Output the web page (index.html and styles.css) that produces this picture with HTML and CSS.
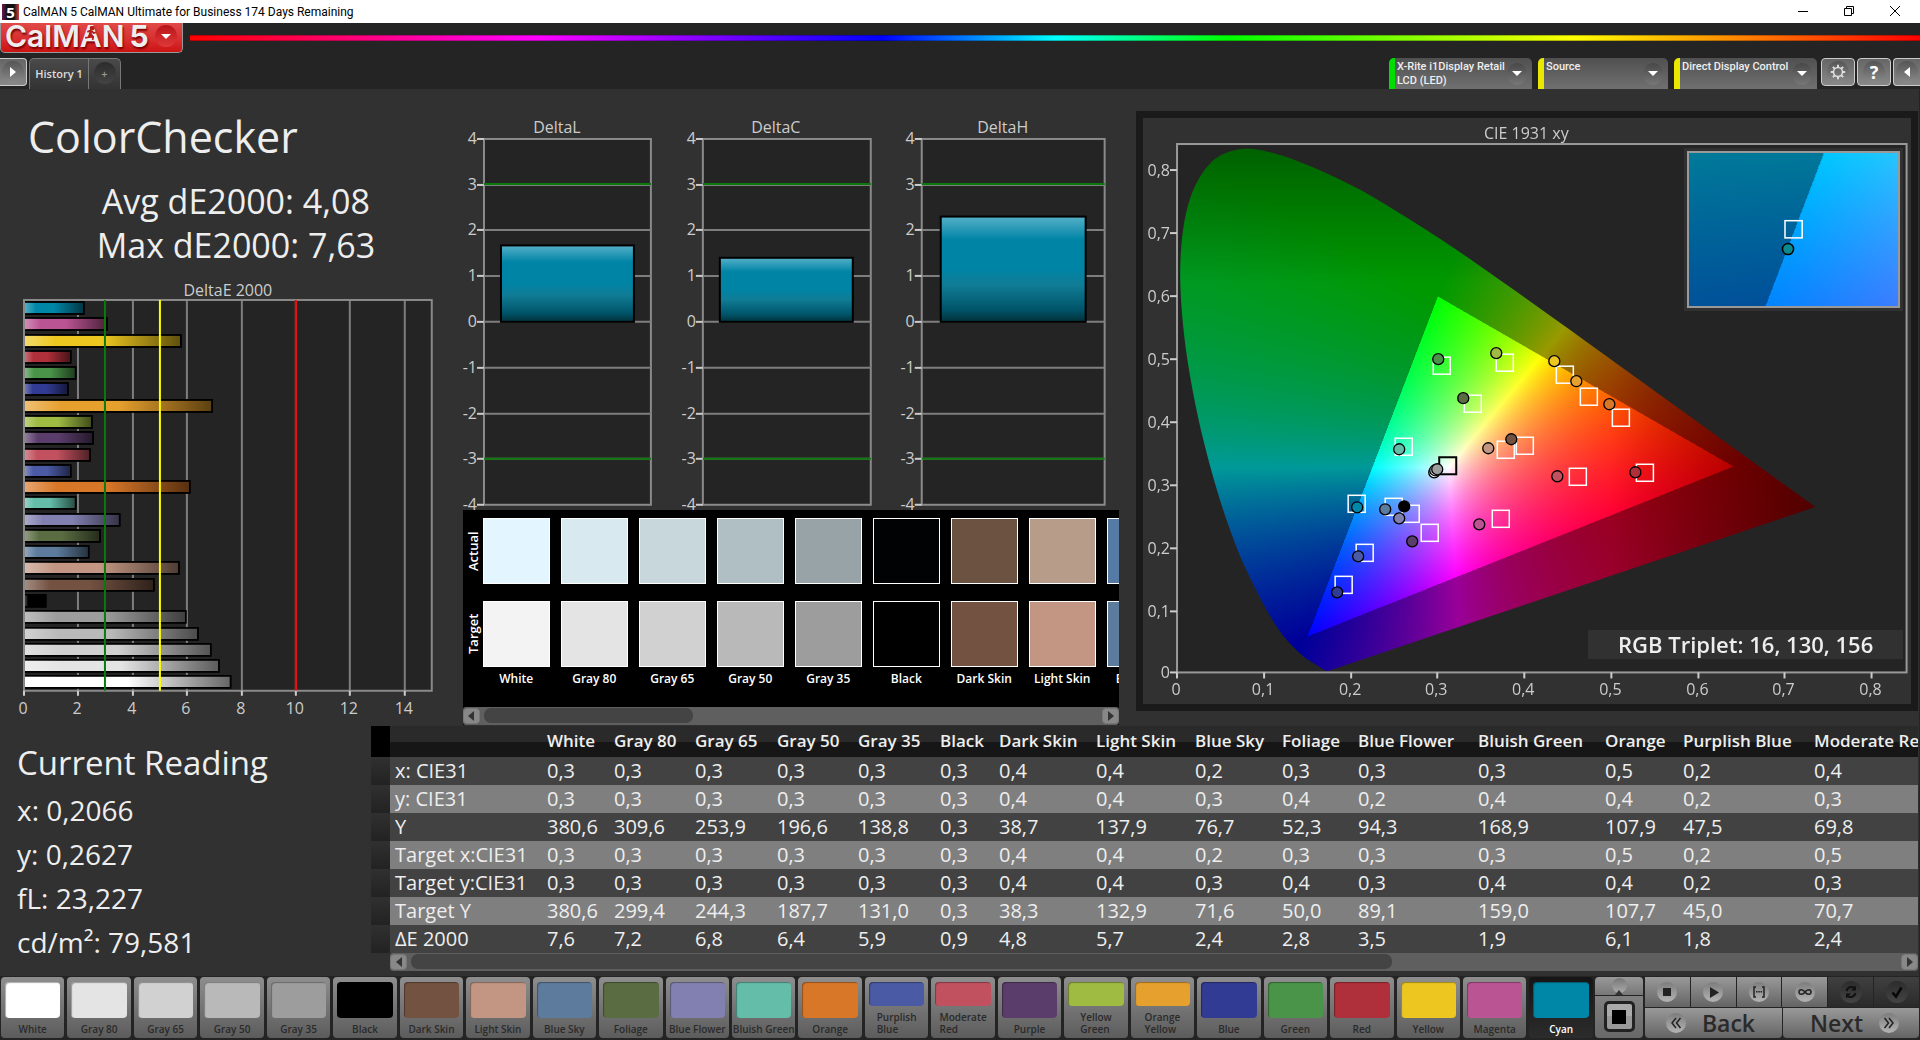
FILE: index.html
```
<!DOCTYPE html>
<html lang="en">
<head>
<meta charset="utf-8">
<title>CalMAN 5 CalMAN Ultimate for Business</title>
<link rel="stylesheet" href="styles.css">
</head>
<body>
<div class="titlebar">
  <span class="app-icon">5</span>
  <span class="app-title">CalMAN 5 CalMAN Ultimate for Business 174 Days Remaining</span>
  <div class="win-controls">
    <button aria-label="Minimize"><svg width="12" height="12" viewBox="0 0 12 12"><path d="M1 6.5h10" stroke="#000" fill="none"/></svg></button>
    <button aria-label="Restore"><svg width="12" height="12" viewBox="0 0 12 12"><path d="M1.500 3.500h7v7h-7zM3.500 3.500v-2h7v7h-2" stroke="#000" fill="none"/></svg></button>
    <button aria-label="Close"><svg width="12" height="12" viewBox="0 0 12 12"><path d="M1 1l10 10M11 1L1 11" stroke="#000" fill="none"/></svg></button>
  </div>
</div>

<header class="brandbar">
  <button class="brand"><span class="brand-name">CalM<span class="brand-a">A<svg class="runner" viewBox="0 0 12 14"><circle cx="7.500" cy="2" r="1.700"/><path d="M6.500 4L3 5.500M6.500 4l-1 4 3 2-.5 3M5.500 8L4 10.500 1 11M6.800 4.500L9 6.500l2-.5" fill="none" stroke-width="1.600"/></svg></span>N<span class="brand-num">5</span></span><span class="knob red"><i class="tri down"></i></span></button>
  <div class="rainbow"></div>
</header>

<nav class="tabbar">
  <button class="square first" aria-label="Show workflow"><span class="knob"><i class="tri right"></i></span></button>
  <div class="tabs">
    <button class="tab">History 1</button>
    <button class="tab add" aria-label="Add history"><span class="knob dark">+</span></button>
  </div>
  <div class="devices">
    <button class="device green"><span>X-Rite i1Display Retail<br>LCD (LED)</span><span class="knob mid"><i class="tri down"></i></span></button>
    <button class="device source"><span>Source</span><span class="knob mid"><i class="tri down"></i></span></button>
    <button class="device"><span>Direct Display Control</span><span class="knob mid"><i class="tri down"></i></span></button>
  </div>
  <div class="tools">
    <button class="square" aria-label="Settings"><span class="knob"><svg width="16" height="16" viewBox="0 0 16 16"><circle cx="8" cy="8" r="4.500" fill="none" stroke="#ddd" stroke-width="1.600"/><path d="M8 .8v2.400M8 12.800v2.400M.8 8h2.400M12.800 8h2.400M2.900 2.900l1.700 1.700M11.400 11.400l1.700 1.700M13.100 2.900l-1.700 1.700M4.600 11.400l-1.700 1.700" stroke="#ddd" stroke-width="2"/></svg></span></button>
    <button class="square" aria-label="Help"><span class="knob help">?</span></button>
    <button class="square last" aria-label="Show panel"><span class="knob"><i class="tri left"></i></span></button>
  </div>
</nav>

<main>
  <div class="upper">
    <section class="summary">
      <h1>ColorChecker</h1>
      <p class="stat">Avg dE2000: 4,08</p>
      <p class="stat">Max dE2000: 7,63</p>
      <svg id="deltae" class="chart" viewBox="0 1 440 449" role="img" aria-label="DeltaE 2000"></svg>
    </section>

    <section class="middle">
      <svg id="deltas" class="chart" viewBox="0 0 690 421" role="img" aria-label="DeltaL, DeltaC and DeltaH"></svg>
      <div class="strip">
        <div class="strip-body">
          <div class="side"><span>Actual</span><span>Target</span></div>
          <div class="pairs" id="pairs"></div>
        </div>
        <div class="scroll"><button aria-label="Scroll left"><i class="tri left"></i></button><div class="track"><div class="thumb short"></div></div><button aria-label="Scroll right"><i class="tri right"></i></button></div>
      </div>
    </section>

    <section class="cie">
      <div class="cie-stage">
        <canvas id="gamut" class="gamut" width="1458" height="1056"></canvas>
        <svg id="ciechart" class="cie-axes" viewBox="0 0 767 586" role="img" aria-label="CIE 1931 xy"></svg>
        <div class="inset"><canvas id="detail" width="207" height="151"></canvas>
          <svg viewBox="0 0 207 151"><rect x="95" y="67" width="17" height="17" fill="none" stroke="#fff" stroke-width="1.500"/><ellipse cx="98" cy="95" rx="5.500" ry="5.500" fill="#0a8a8c" stroke="#000" stroke-width="1.500"/></svg></div>
        <div class="triplet">RGB Triplet: 16, 130, 156</div>
      </div>
    </section>
  </div>

  <div class="lower">
    <section class="reading">
      <h2>Current Reading</h2>
      <p>x: 0,2066</p>
      <p>y: 0,2627</p>
      <p>fL: 23,227</p>
      <p>cd/m²: 79,581</p>
    </section>
    <section class="data">
      <div class="data-clip">
        <table>
          <colgroup><col style="width:19px"><col style="width:152px"><col style="width:67px"><col style="width:81px"><col style="width:82px"><col style="width:81px"><col style="width:82px"><col style="width:59px"><col style="width:97px"><col style="width:99px"><col style="width:87px"><col style="width:76px"><col style="width:120px"><col style="width:127px"><col style="width:78px"><col style="width:131px"><col style="width:140px"></colgroup>
          <thead><tr><td></td><td></td><th>White</th><th>Gray 80</th><th>Gray 65</th><th>Gray 50</th><th>Gray 35</th><th>Black</th><th>Dark Skin</th><th>Light Skin</th><th>Blue Sky</th><th>Foliage</th><th>Blue Flower</th><th>Bluish Green</th><th>Orange</th><th>Purplish Blue</th><th>Moderate Red</th></tr></thead>
          <tbody>
          <tr><td></td><th>x: CIE31</th><td>0,3</td><td>0,3</td><td>0,3</td><td>0,3</td><td>0,3</td><td>0,3</td><td>0,4</td><td>0,4</td><td>0,2</td><td>0,3</td><td>0,3</td><td>0,3</td><td>0,5</td><td>0,2</td><td>0,4</td></tr>
          <tr><td></td><th>y: CIE31</th><td>0,3</td><td>0,3</td><td>0,3</td><td>0,3</td><td>0,3</td><td>0,3</td><td>0,4</td><td>0,4</td><td>0,3</td><td>0,4</td><td>0,2</td><td>0,4</td><td>0,4</td><td>0,2</td><td>0,3</td></tr>
          <tr><td></td><th>Y</th><td>380,6</td><td>309,6</td><td>253,9</td><td>196,6</td><td>138,8</td><td>0,3</td><td>38,7</td><td>137,9</td><td>76,7</td><td>52,3</td><td>94,3</td><td>168,9</td><td>107,9</td><td>47,5</td><td>69,8</td></tr>
          <tr><td></td><th>Target x:CIE31</th><td>0,3</td><td>0,3</td><td>0,3</td><td>0,3</td><td>0,3</td><td>0,3</td><td>0,4</td><td>0,4</td><td>0,2</td><td>0,3</td><td>0,3</td><td>0,3</td><td>0,5</td><td>0,2</td><td>0,5</td></tr>
          <tr><td></td><th>Target y:CIE31</th><td>0,3</td><td>0,3</td><td>0,3</td><td>0,3</td><td>0,3</td><td>0,3</td><td>0,4</td><td>0,4</td><td>0,3</td><td>0,4</td><td>0,3</td><td>0,4</td><td>0,4</td><td>0,2</td><td>0,3</td></tr>
          <tr><td></td><th>Target Y</th><td>380,6</td><td>299,4</td><td>244,3</td><td>187,7</td><td>131,0</td><td>0,3</td><td>38,3</td><td>132,9</td><td>71,6</td><td>50,0</td><td>89,1</td><td>159,0</td><td>107,7</td><td>45,0</td><td>70,7</td></tr>
          <tr><td></td><th>ΔE 2000</th><td>7,6</td><td>7,2</td><td>6,8</td><td>6,4</td><td>5,9</td><td>0,9</td><td>4,8</td><td>5,7</td><td>2,4</td><td>2,8</td><td>3,5</td><td>1,9</td><td>6,1</td><td>1,8</td><td>2,4</td></tr>
          </tbody>
        </table>
      </div>
      <div class="scroll"><button aria-label="Scroll left"><i class="tri left"></i></button><div class="track"><div class="thumb long"></div></div><button aria-label="Scroll right"><i class="tri right"></i></button></div>
    </section>
  </div>
</main>

<footer>
  <div class="patches" id="patches"></div>
  <div class="pattern">
    <button class="up" aria-label="More"><span class="knob tiny"><i class="tri up"></i></span></button>
    <button class="window" aria-label="Pattern window"><span></span></button>
  </div>
  <div class="controls">
    <div class="row">
      <button aria-label="Stop"><span class="knob lite"><svg width="20" height="20" viewBox="0 0 20 20"><path d="M6 6h8v8H6z"/></svg></span></button>
      <button aria-label="Play"><span class="knob lite"><svg width="20" height="20" viewBox="0 0 20 20"><path d="M7 5l9 5.500L7 16z"/></svg></span></button>
      <button aria-label="Read series"><span class="knob lite"><svg width="20" height="20" viewBox="0 0 20 20"><path d="M7 5H5v10h2M13 5h2v10h-2" fill="none" stroke="#222" stroke-width="1.500"/><path d="M7 9h1.500v1.500H7zM9.300 9h1.500v1.500H9.300zM11.600 9h1.500v1.500h-1.500z"/></svg></span></button>
      <button aria-label="Read continuous"><span class="knob lite"><svg width="20" height="20" viewBox="0 0 20 20"><path d="M10 10C8 7 4 7 4 10s4 3 6 0 6-3 6 0-4 3-6 0z" fill="none" stroke="#222" stroke-width="1.500"/></svg></span></button>
      <button class="off" aria-label="Refresh"><span class="knob dark"><svg width="20" height="20" viewBox="0 0 20 20"><path d="M5.500 9a5 5 0 0 1 8-3M14.500 11a5 5 0 0 1-8 3" fill="none" stroke="#111" stroke-width="2"/><path d="M15 3.500v5h-5zM5 16.500v-5h5z" fill="#111"/></svg></span></button>
      <button class="off" aria-label="Accept"><span class="knob dark"><svg width="20" height="20" viewBox="0 0 20 20"><path d="M5.500 10.500l3.500 4 5.500-9" fill="none" stroke="#080808" stroke-width="2.600"/></svg></span></button>
    </div>
    <div class="row big">
      <button><span class="knob lite"><svg width="20" height="20" viewBox="0 0 20 20"><path d="M10 5l-4 5 4 5M14.500 5l-4 5 4 5" fill="none" stroke="#222" stroke-width="1.500"/></svg></span>Back</button>
      <button>Next<span class="knob lite"><svg width="20" height="20" viewBox="0 0 20 20"><path d="M10 5l4 5-4 5M5.500 5l4 5-4 5" fill="none" stroke="#222" stroke-width="1.500"/></svg></span></button>
    </div>
  </div>
</footer>
<script src="charts.js"></script>
</body>
</html>
```

FILE: styles.css
```
* { box-sizing: border-box; }
body { margin: 0; background: #242424; color: #eee; font-family: "Open Sans", "Noto Sans", sans-serif; overflow-x: hidden; }
h1, h2, p { margin: 0; font-weight: 400; }
button { font: inherit; color: inherit; border: 0; padding: 0; margin: 0; background: none; }
svg { display: block; fill: #222; }

/* window title */
.titlebar { display: flex; align-items: center; height: 23px; background: #fff; color: #000; font: 12px Roboto, sans-serif; padding-left: 2px; }
.app-icon { width: 17px; height: 16px; margin-right: 4px; background: linear-gradient(90deg, #6a1a4a, #111 30%, #111 70%, #c44 ); color: #fff; font: bold 15px/16px "Open Sans", sans-serif; text-align: center; }
.win-controls { display: flex; margin-left: auto; margin-right: 2px; }
.win-controls button { width: 46px; height: 22px; display: flex; align-items: center; justify-content: center; padding-bottom: 2px; }

/* brand */
.brandbar { display: flex; align-items: flex-start; gap: 7px; height: 35px; }
.brand { width: 183px; height: 30px; display: flex; align-items: center; justify-content: space-between; padding: 0 5px 3px 4px; color: #eee; background: linear-gradient(#e04a48, #d82c2e 60%, #cc1212); border: 1px solid #999; border-top: 0; border-radius: 0 0 5px 5px; }
.brand-name { font: 600 30px/28px "Inter", sans-serif; text-shadow: 1px 2px 2px #700; white-space: nowrap; }
.brand-a { position: relative; }
.runner { position: absolute; left: 4px; top: 8px; width: 13px; height: 15px; fill: #b41a1a; stroke: #b41a1a; }
.brand-num { margin-left: 5px; font-weight: 700; }
.rainbow { flex: 1; height: 6px; margin-top: 12px; background: linear-gradient(90deg, #f00, #f0f 20%, #00f 40%, #0ff 50%, #0f0 60%, #ff0 80%, #f00); border-top: 1px solid #0004; border-bottom: 1px solid #0004; }

.knob { flex: none; width: 22px; height: 22px; border-radius: 50%; display: flex; align-items: center; justify-content: center; background: linear-gradient(#555, #8a8a8a); }
.knob.red { background: linear-gradient(#b81418, #e0383a); }
.knob.mid { background: linear-gradient(#484848, #777); }
.knob.dark { background: linear-gradient(#2c2c2c, #444); color: #999; }
.knob.lite { width: 20px; height: 20px; background: linear-gradient(#7c7c7c, #b4b4b4); }
.knob.tiny { width: 15px; height: 15px; background: linear-gradient(#777, #aaa); }
.knob.help { font-size: 18px; font-weight: 700; line-height: 22px; color: #fff; }
.tri { display: block; width: 0; height: 0; border: 5px solid transparent; }
.tri.down { border-top-color: #fff; border-bottom: 0; }
.tri.right { border-left: 6px solid #fff; border-right: 0; }
.tri.left { border-right: 6px solid #fff; border-left: 0; }
.tri.up { border-bottom-color: #333; border-top: 0; border-width: 0 4px 5px; }

/* tab bar */
.tabbar { display: flex; align-items: flex-start; height: 31px; font-size: 12px; font-weight: 600; }
.square { width: 34px; height: 28px; display: flex; align-items: center; justify-content: center; background: linear-gradient(#666, #888); border: 1px solid #ccc; border-radius: 4px; }
.square.first { width: 27px; border-left: 0; border-radius: 0 4px 4px 0; }
.square.last { width: 27px; border-right: 0; border-radius: 4px 0 0 4px; }
.tabs { display: flex; margin-left: 2px; border: 1px solid #777; border-bottom: 0; border-radius: 5px 5px 0 0; height: 31px; background: linear-gradient(#4a4a4a, #333); }
.tab { width: 58px; font-size: 11px; color: #ddd; padding-bottom: 2px; }
.tab.add { width: 32px; border-left: 1px solid #777; display: flex; align-items: center; justify-content: center; }
.devices { display: flex; gap: 6px; margin-left: auto; }
.device { width: 143px; height: 31px; display: flex; align-items: flex-start; justify-content: space-between; text-align: left; padding: 0 5px 0 2px; font: 500 11px/14px Roboto, sans-serif; white-space: nowrap; background: linear-gradient(#505050, #707070); border-left: 6px solid #e8e800; border-radius: 5px 5px 0 0; color: #eee; }
.device.source { width: 130px; }
.device.green { border-left-color: #0d0; }
.device span:first-child { padding-top: 2px; }
.device .knob { width: 20px; align-self: center; }
.tools { display: flex; gap: 2px; margin-left: 4px; }

/* workspace */
main { background: #313131; border-left: 1px solid #222; margin-right: 1px; margin-left: -1px; }
.upper { display: grid; grid-template-columns: minmax(0, 440fr) minmax(0, 690fr) minmax(0, 790fr); align-items: start; }
.chart { width: 100%; }
.chart text, .cie-axes text { fill: #ccc; font-size: 16px; }
.summary h1 { font-size: 43px; line-height: 56px; padding: 20px 0 0 28px; }
.stat { font-size: 34px; line-height: 44px; text-align: center; padding-left: 32px; white-space: nowrap; }
.stat:nth-of-type(1) { margin-top: 14px; }
.strip { margin: 0 10px 0 23px; background: #000; }
.strip-body { display: flex; height: 197px; padding-top: 8px; overflow: hidden; }
.side { flex: none; width: 20px; font-size: 13px; font-weight: 600; }
.side span { display: block; height: 66px; writing-mode: vertical-rl; transform: rotate(180deg); text-align: center; line-height: 20px; color: #fff; margin-bottom: 17px; }
.pairs { display: flex; gap: 11px; overflow: hidden; }
.pair { flex: none; width: 67px; font-size: 12px; font-weight: 600; text-align: center; line-height: 18px; color: #fff; white-space: nowrap; }
.pair i { display: block; height: 66px; border: 1px solid #fff; margin-bottom: 17px; }
.pair i + i { margin-bottom: 3px; }
.scroll { display: flex; align-items: center; height: 18px; background: #5f5f5f; border-radius: 3px; }
.scroll button { width: 17px; height: 16px; display: flex; align-items: center; justify-content: center; background: #888; border: 1px solid #777; border-radius: 4px; }
.scroll .tri.left { border-right-color: #333; }
.scroll .tri.right { border-left-color: #333; }
.track { flex: 1; padding: 0 4px; }
.thumb { height: 15px; border-radius: 7px; background: #444; }
.thumb.short { width: 34%; }
.thumb.long { width: 66%; }

/* chromaticity diagram */
.cie { margin: 22px 1px 0 7px; padding: 7px; background: #1a1a1a; }
.cie-stage { position: relative; aspect-ratio: 767 / 586; background: #313131; }
.gamut { position: absolute; left: 4.433%; top: 4.437%; width: 95.046%; height: 90.102%; background: #242424; }
.cie-axes { position: absolute; inset: 0; width: 100%; height: 100%; }
.inset { position: absolute; right: 8px; top: 30px; width: 28.553%; border: 3px solid #313131; }
.inset canvas { display: block; width: 100%; border: 2px solid #999; }
.inset svg { position: absolute; inset: 2px; width: calc(100% - 4px); }
.triplet { position: absolute; right: 8px; bottom: 45px; width: 41%; background: #313131; font-size: 22px; line-height: 29px; text-align: center; font-weight: 600; }

/* readings */
.lower { display: grid; grid-template-columns: minmax(0, 371fr) minmax(0, 1547fr); margin-right: 1px; }
.reading { padding: 14px 0 0 17px; }
.reading h2 { font-size: 33px; line-height: 48px; margin-bottom: 1px; }
.reading p { font-size: 28px; line-height: 44px; }
.data { padding: 1px 0 5px; }
.data-clip { overflow: hidden; }
table { table-layout: fixed; width: 1578px; border-collapse: collapse; font-size: 20px; line-height: 28px; color: #eee; }
td, th { padding: 0 0 0 5px; height: 28px; text-align: left; font-weight: 400; white-space: nowrap; }
thead tr { background: linear-gradient(#2a2a2a 50%, #161616 50%); }
thead td, thead th { height: 31px; }
thead th { font-size: 17px; font-weight: 600; }
tbody tr:nth-child(odd) { background: #424242; }
tbody tr:nth-child(even) { background: #7f7f7f; }
tbody td:first-child { background: linear-gradient(#303030, #222); }
thead td:first-child { background: #000; }
.data .scroll { margin-left: 19px; }

/* footer */
footer { display: flex; gap: 2px; padding: 1px 1px 0 1px; background: #242424; color: #2a2a2a; }
.patches { flex: 1; display: flex; gap: 3px; }
.patch { flex: 1 1 0; min-width: 0; height: 61px; display: flex; flex-direction: column; padding: 5px 4px 1px; border-radius: 4px; background: linear-gradient(#8e8e8e, #5c5c5c); font-size: 10px; font-weight: 600; line-height: 12px; color: #2a2a2a; }
.patch i { flex: 1; width: 100%; border-radius: 4px; box-shadow: inset 1px 1px 1px #0005; }
.patch span { display: block; align-self: center; white-space: pre; margin: 5px -8px 2px; text-align: left; }
.patch.active { background: linear-gradient(#151515, #2c2c2c); color: #fff; }
.pattern { width: 48px; display: flex; flex-direction: column; gap: 1px; }
.pattern button { display: flex; align-items: center; justify-content: center; background: linear-gradient(#999, #777); }
.pattern .up { height: 18px; border-radius: 4px 4px 0 0; }
.pattern .window { flex: 1; border-radius: 0 0 4px 4px; background: linear-gradient(#808080, #686868); }
.window span { width: 31px; height: 31px; border: 3px solid #222; border-radius: 5px; background: linear-gradient(#000, #000) center / 14px 14px no-repeat, linear-gradient(#aaa 50%, #999 50%); }
.controls { width: 274px; display: flex; flex-direction: column; gap: 1px; }
.row { display: flex; gap: 1px; height: 30px; }
.row button { flex: 1 1 0; display: flex; align-items: center; justify-content: center; background: linear-gradient(#999, #646464); }
.row button.off { background: linear-gradient(#404040, #2a2a2a); }
.row.big button { font-size: 23px; font-weight: 600; line-height: 28px; justify-content: space-between; padding: 0 27px 0 21px; border-radius: 0 0 4px 4px; }
.row.big button:last-child { padding: 0 20px 0 27px; }
```

FILE: charts.js
```
const patches = [
  ["White", "#ffffff", 7.6], ["Gray 80", "#e4e4e4", 7.17], ["Gray 65", "#d1d1d1", 6.87], ["Gray 50", "#b9b9b9", 6.4],
  ["Gray 35", "#9d9d9d", 5.95], ["Black", "#000000", 0.8], ["Dark Skin", "#745242", 4.78], ["Light Skin", "#c29682", 5.7],
  ["Blue Sky", "#5d7b9d", 2.38], ["Foliage", "#5a6c42", 2.8], ["Blue Flower", "#8280b0", 3.52], ["Bluish Green", "#63bda9", 1.9],
  ["Orange", "#d97728", 6.1], ["Purplish\nBlue", "#4a5aa4", 1.72], ["Moderate\nRed", "#c1515f", 2.43], ["Purple", "#5a3d6a", 2.54],
  ["Yellow\nGreen", "#9fbb42", 2.5], ["Orange\nYellow", "#e6a02d", 6.92], ["Blue", "#323b93", 1.62], ["Green", "#4a9449", 1.9],
  ["Red", "#af2f3a", 1.72], ["Yellow", "#edc71f", 5.77], ["Magenta", "#bb5493", 3.05], ["Cyan", "#0086a6", 2.2]
];

document.getElementById("patches").innerHTML = patches.map(([name, color]) =>
  `<button class="patch${name === "Cyan" ? " active" : ""}"><i style="background:${color}"></i><span>${name}</span></button>`).join("");

const pairs = [
  ["White", "#e3f6ff", "#f3f3f3"], ["Gray 80", "#d8eaf0", "#e4e4e4"], ["Gray 65", "#c7d7dc", "#d1d1d1"],
  ["Gray 50", "#b0bfc4", "#b9b9b9"], ["Gray 35", "#97a3a6", "#9d9d9d"], ["Black", "#010204", "#000000"],
  ["Dark Skin", "#6b5241", "#745242"], ["Light Skin", "#b79d89", "#c29682"], ["Blue Sky", "#557ba4", "#5d7b9d"]
];
document.getElementById("pairs").innerHTML = pairs.map(([name, a, t]) =>
  `<div class="pair"><i style="background:${a}"></i><i style="background:${t}"></i>${name}</div>`).join("");

const line = (x1, y1, x2, y2, c, w = 2) => `<line x1="${x1}" y1="${y1}" x2="${x2}" y2="${y2}" stroke="${c}" stroke-width="${w}"/>`;
const text = (x, y, s, anchor = "middle") => `<text x="${x}" y="${y}" text-anchor="${anchor}">${s}</text>`;
const grid = "#7e7e7e", axis = "#8a8a8a", tick = "#cccccc";

/* DeltaE 2000: horizontal bars */
(function () {
  const x0 = 24, unit = 27.2, top = 34, bottom = 425, right = 432;
  let s = text(228, 30, "DeltaE 2000") + `<rect x="${x0}" y="${top}" width="${right - x0}" height="${bottom - top}" fill="#242424"/>`;
  for (let v = 2; v < 15; v += 2) s += line(Math.round(x0 + v * unit), top, Math.round(x0 + v * unit), bottom, grid);
  const step = 16.28;
  [...patches].reverse().forEach(([, color, value], i) => {
    const y = Math.round(top + 2 + i * step);
    s += `<linearGradient id="b${i}"><stop offset="0" stop-color="#fff" stop-opacity=".35"/><stop offset=".2" stop-color="#fff" stop-opacity="0"/><stop offset=".5" stop-color="#000" stop-opacity="0"/><stop offset="1" stop-color="#000" stop-opacity=".6"/></linearGradient>`;
    for (const fill of [color, `url(#b${i})`]) s += `<rect x="${x0}" y="${y}" width="${value * unit}" height="12" fill="${fill}" stroke="#000" stroke-width="1.500"/>`;
  });
  s += `<rect x="${x0}" y="${top}" width="${right - x0}" height="${bottom - top}" fill="none" stroke="${axis}" stroke-width="2"/>`;
  s += line(105, top, 105, bottom, "#0a7a0a") + line(160, top, 160, bottom, "#ff0") + line(296, top, 296, bottom, "#f00");
  for (let v = 0; v < 15; v += 2) {
    const x = Math.round(x0 + v * unit);
    s += line(x, bottom, x, bottom + 5, tick) + text(x - 1, 448, v);
  }
  document.getElementById("deltae").innerHTML = s;
})();

/* DeltaL / DeltaC / DeltaH */
(function () {
  let s = `<linearGradient id="v" x2="0" y2="1"><stop offset="0" stop-color="#55b0c8"/><stop offset=".22" stop-color="#0084a6"/><stop offset=".5" stop-color="#0084a6"/><stop offset=".65" stop-color="#107c95"/><stop offset=".88" stop-color="#00556a"/><stop offset="1" stop-color="#023039"/></linearGradient>`;
  const zero = 233, unit = 45.8;
  const charts = [["DeltaL", 44, 211, 117, 61, 194, 1.67], ["DeltaC", 263, 431, 336, 280, 413, 1.4], ["DeltaH", 482, 665, 563, 501, 646, 2.3]];
  for (const [name, l, r, tx, bl, br, v] of charts) {
    const top = Math.round(zero - 4 * unit), bottom = Math.round(zero + 4 * unit);
    s += text(tx, 44, name) + `<rect x="${l}" y="${top}" width="${r - l}" height="${bottom - top}" fill="#242424" stroke="${axis}" stroke-width="2"/>`;
    for (let k = -4; k <= 4; k++) {
      const y = Math.round(zero - k * unit);
      if (Math.abs(k) < 4) s += line(l, y, r, y, grid);
      s += line(l - 7, y, l, y, tick) + text(l - 7, y + 5, k, "end");
    }
    s += line(l, zero - 138, r, zero - 138, "#0c770c") + line(l, zero + 137, r, zero + 137, "#0c770c");
    s += `<rect x="${bl}" y="${zero - v * unit}" width="${br - bl}" height="${v * unit}" fill="url(#v)" stroke="#000" stroke-width="2"/>`;
  }
  document.getElementById("deltas").innerHTML = s;
})();

/* chromaticity to display colour, dimmed outside the Rec.709 triangle */
const SX = 867.6, SY = 629.6, Y0 = 530;
function shade(x, y) {
  const z = 1 - x - y;
  let c = [3.2406 * x - 1.5372 * y - 0.4986 * z, -0.9689 * x + 1.8758 * y + 0.0415 * z, 0.0557 * x - 0.204 * y + 1.057 * z];
  const inside = Math.min(...c) >= 0;
  c = c.map(v => Math.max(0, v));
  let f = 255 * (inside ? 1 : 0.6) / Math.max(...c);
  f *= Math.min(1, Math.max(0.45, 1 - 2.05 * (x - 0.5)));
  f *= Math.min(1, Math.max(0.6, 1 - 1.7 * (y - 0.62)));
  return c.map(v => v * f);
}
function paint(canvas, toXY) {
  const g = canvas.getContext("2d"), w = canvas.width, h = canvas.height, img = g.createImageData(w, h);
  for (let j = 0, p = 0; j < h; j++) for (let i = 0; i < w; i++, p += 4) {
    const c = shade(...toXY(i, j));
    img.data[p] = c[0]; img.data[p + 1] = c[1]; img.data[p + 2] = c[2]; img.data[p + 3] = 255;
  }
  g.putImageData(img, 0, 0);
  return g;
}
const locus = [[.1741, .005], [.1714, .0051], [.1689, .0069], [.1644, .0109], [.1566, .0177], [.144, .0297], [.1241, .0578], [.1096, .0868], [.0913, .1327], [.0687, .2007], [.0454, .295], [.0235, .4127], [.0082, .5384], [.0039, .6548], [.0139, .7502], [.0389, .812], [.0743, .8338], [.1142, .8262], [.1547, .8059], [.1929, .7816], [.2296, .7543], [.3016, .6923], [.3731, .6245], [.4441, .5547], [.5125, .4866], [.5752, .4242], [.627, .3725], [.6658, .334], [.6915, .3083], [.719, .2809], [.7347, .2653]];
(function () {
  const g = paint(document.getElementById("gamut"), (i, j) => [i / 2 / SX, (Y0 - j / 2) / SY]);
  const pts = locus.map(([x, y]) => [x * SX * 2, (Y0 - y * SY) * 2]);
  g.globalCompositeOperation = "destination-in";
  g.beginPath();
  g.moveTo(...pts[0]);
  for (let i = 0; i < pts.length - 1; i++) {
    const a = pts[Math.max(0, i - 1)], b = pts[i], c = pts[i + 1], d = pts[Math.min(pts.length - 1, i + 2)];
    g.bezierCurveTo(b[0] + (c[0] - a[0]) / 6, b[1] + (c[1] - a[1]) / 6, c[0] - (d[0] - b[0]) / 6, c[1] - (d[1] - b[1]) / 6, c[0], c[1]);
  }
  g.closePath();
  g.fill();
  paint(document.getElementById("detail"), (i, j) => [.2081 + (i - 103.5) / (SX * 4.6), .2693 - (j - 76.5) / (SY * 4.6)]);

  const left = 34, top = 26, bottom = 554, right = 763;
  let s = text(383, 21, "CIE 1931 xy");
  s += `<rect x="${left}" y="${top}" width="${right - left}" height="${bottom - top}" fill="none" stroke="#999" stroke-width="2"/>`;
  for (let k = 0; k <= 8; k++) {
    const label = k ? "0," + k : "0", x = Math.round(left + k * SX / 10), y = Math.min(bottom, Math.round(top + Y0 - k * SY / 10));
    s += line(x, bottom, x, bottom + 6, tick) + text(x - 1, 577, label) + line(left - 7, y, left, y, tick) + text(left - 7, y + 6, label, "end");
  }
  const targets = [[265, 222], [328, 219], [296, 260], [227, 303], [329, 306], [348, 302], [180, 360], [217, 363], [234, 370], [253, 389], [324, 375], [188, 409], [167, 441], [388, 231], [412, 253], [444, 274], [401, 333], [468, 329], [271, 322]];
  targets.forEach(([x, y], i) => {
    const last = i === targets.length - 1;
    s += `<rect x="${left + x - 9}" y="${top + y - 9}" width="17" height="17" fill="none" stroke="${last ? "#000" : "#fff"}" stroke-width="${last ? 2 : 1.5}"/>`;
  });
  const measured = [[261, 215, "#4a9449"], [319, 209, "#9fbb42"], [286, 254, "#5a6c42"], [222, 305, "#63bda9"], [334, 295, "#745242"], [311, 304, "#c29682"], [257, 328, "#fff"], [258, 326, "#ddd"], [260, 325, "#9d9d9d"], [180, 363, "#0088a8"], [208, 365, "#5d7b9d"], [227, 362, "#000"], [222, 374, "#8280b0"], [235, 397, "#5a3d6a"], [302, 380, "#bb5493"], [181, 412, "#4a5aa4"], [160, 448, "#323b93"], [377, 217, "#edc71f"], [399, 237, "#e6a02d"], [432, 260, "#d97728"], [380, 332, "#c1515f"], [458, 328, "#af2f3a"]];
  for (const [x, y, c] of measured) s += `<circle cx="${left + x}" cy="${top + y}" r="5.500" fill="${c}" stroke="#000" stroke-width="1.300"/>`;
  document.getElementById("ciechart").innerHTML = s;
})();
```
